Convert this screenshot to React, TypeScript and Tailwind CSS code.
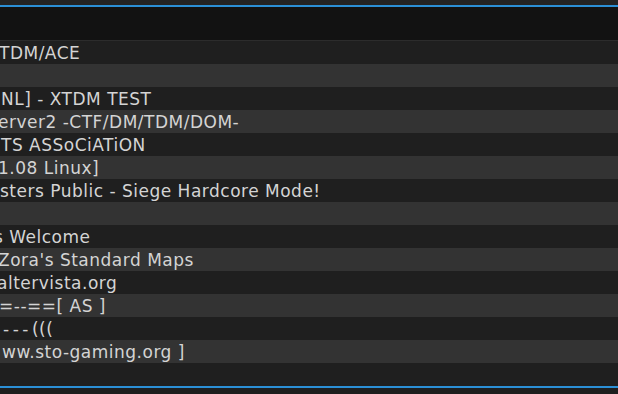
const rows: { text: string; offset: string }[] = [
  { text: "TDM/ACE", offset: "ml-[-1px]" },
  { text: "", offset: "" },
  { text: "NL] - XTDM TEST", offset: "ml-[1px]" },
  { text: "erver2 -CTF/DM/TDM/DOM-", offset: "ml-[-2px]" },
  { text: "TS ASSoCiATiON", offset: "ml-[1px]" },
  { text: "1.08 Linux]", offset: "ml-[-2px]" },
  { text: "sters Public - Siege Hardcore Mode!", offset: "ml-[0px]" },
  { text: "", offset: "" },
  { text: "s Welcome", offset: "ml-[-6px]" },
  { text: "Zora's Standard Maps", offset: "ml-[-2px]" },
  { text: "altervista.org", offset: "ml-[-3px]" },
  { text: "=--==[ AS ]", offset: "ml-[-1px]" },
  { text: "---(((", offset: "ml-[3px]" },
  { text: "ww.sto-gaming.org ]", offset: "ml-[2px]" },
  { text: "", offset: "" },
];

export default function App() {
  return (
    <div className="flex h-[394px] w-[618px] flex-col overflow-hidden bg-[#1c1c1c] font-['DejaVu_Sans',sans-serif] text-[17px] tracking-[0.5px] text-[#d4d4d4]">
      <div className="h-[5px] bg-[#232323]" />
      <div className="h-[2px] bg-[#2b8fd6]" />
      <div className="h-[33px] bg-[#121212]" />
      <div className="h-px bg-[#2c2c2c]" />

      <div className="flex flex-col">
        {rows.map((row, i) => (
          <div
            key={i}
            className={`flex h-[23px] items-center overflow-hidden whitespace-pre ${
              i % 2 === 0 ? "bg-[#1f1f1f]" : "bg-[#333333]"
            }`}
          >
            <span className={`pt-[2px] leading-none ${row.offset}`}>
              {row.text.startsWith("---") ? (
                <>
                  <span className="tracking-[3.5px]">---</span>
                  {row.text.slice(3)}
                </>
              ) : (
                row.text
              )}
            </span>
          </div>
        ))}
      </div>

      <div className="h-[2px] bg-[#2b8fd6]" />
      <div className="flex-1 bg-[#1e1e1e]" />
    </div>
  );
}
